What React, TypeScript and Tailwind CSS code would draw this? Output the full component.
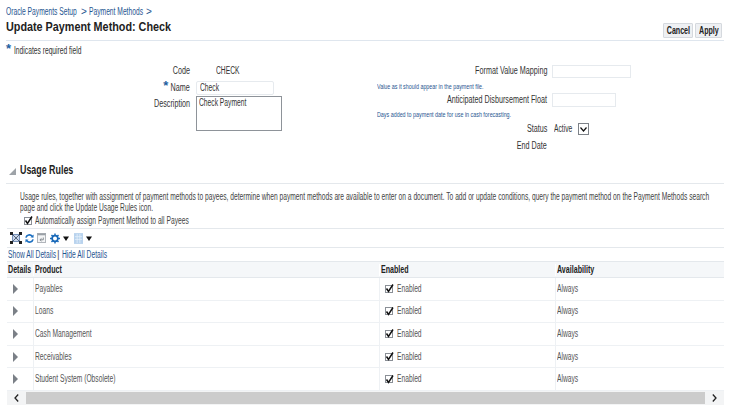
import type { ReactNode } from "react";

const ROWS = ["Payables", "Loans", "Cash Management", "Receivables", "Student System (Obsolete)"];

// The reference text is squeezed horizontally, and no installed family is that narrow
const SCALES = {
  body: "scale-x-[0.67]",
  para: "scale-x-[0.667]",
  label: "scale-x-[0.72]",
  head: "scale-x-[0.71]",
  title: "scale-x-[0.9]",
  section: "scale-x-[0.74]",
};

function T({
  children,
  s = "body",
  className = "origin-left",
}: {
  children: ReactNode;
  s?: keyof typeof SCALES;
  className?: string;
}) {
  return <span className={`inline-block whitespace-nowrap ${SCALES[s]} ${className}`}>{children}</span>;
}

// ── Small pieces ───────────────────────────────────────────────────────

function Check() {
  return (
    <span className="w-[8px] h-[8px] border border-[#8a8f96] bg-white flex items-center justify-center shrink-0">
      <svg width="9" height="9" viewBox="0 0 9 9" className="shrink-0">
        <path d="M1.5 4.5 L3.5 7.5 L8 0.5" fill="none" stroke="#111" strokeWidth="1.5" />
      </svg>
    </span>
  );
}

function Star({ className = "" }: { className?: string }) {
  return <span className={`text-[#1f5f9f] font-bold text-[13px] leading-[8px] h-[8px] ${className}`}>*</span>;
}

function Caret() {
  return (
    <svg width="6" height="5" viewBox="0 0 6 5">
      <path d="M0 0.5 H6 L3 5 Z" fill="#111" />
    </svg>
  );
}

function Toolbar() {
  return (
    <div className="h-[19px] flex items-center pl-[3px] border-b border-[#e4e8ec]">
      {/* detach */}
      <svg width="12" height="12" viewBox="0 0 12 12" className="mr-[3px]">
        <rect x="2.5" y="2.5" width="7" height="7" fill="#c9d6ea" stroke="#5b7aa8" strokeWidth="0.8" />
        <path d="M3 3 L9 9 M9 3 L3 9" stroke="#3a4a60" strokeWidth="0.8" />
        <rect x="0" y="0" width="3" height="3" fill="#222" />
        <rect x="9" y="0" width="3" height="3" fill="#222" />
        <rect x="0" y="9" width="3" height="3" fill="#222" />
        <rect x="9" y="9" width="3" height="3" fill="#222" />
      </svg>
      {/* refresh */}
      <svg width="9" height="9" viewBox="0 0 10 10" className="mr-[3px]">
        <path d="M1 4 A4 4 0 0 1 8 2.5" fill="none" stroke="#1c6fc0" strokeWidth="1.8" />
        <path d="M9.6 0.6 L9.4 4.2 L6 3.6 Z" fill="#1c6fc0" />
        <path d="M9 6 A4 4 0 0 1 2 7.5" fill="none" stroke="#1c6fc0" strokeWidth="1.8" />
        <path d="M0.4 9.4 L0.6 5.8 L4 6.4 Z" fill="#1c6fc0" />
      </svg>
      {/* wrap */}
      <svg width="9" height="10" viewBox="0 0 10 11" className="mr-[4px]">
        <rect x="0.5" y="0.5" width="9" height="10" fill="#f4f5f6" stroke="#a9aeb4" />
        <rect x="0.5" y="0.5" width="9" height="2" fill="#9aa0a6" />
        <path d="M7 5 V7.5 H3.5 M5 6 L3.2 7.5 L5 9" fill="none" stroke="#7d8389" />
      </svg>
      {/* settings */}
      <svg width="10" height="11" viewBox="0 0 12 12" className="mr-[3px]">
        <circle cx="6" cy="6" r="3.4" fill="none" stroke="#1768b8" strokeWidth="2" />
        <path d="M6 0 V2.5 M6 9.5 V12 M0 6 H2.5 M9.5 6 H12 M1.8 1.8 L3.5 3.5 M8.5 8.5 L10.2 10.2 M10.2 1.8 L8.5 3.5 M3.5 8.5 L1.8 10.2" stroke="#1768b8" strokeWidth="1.7" />
      </svg>
      <span className="mr-[5px] flex"><Caret /></span>
      {/* columns */}
      <svg width="9" height="11" viewBox="0 0 10 12" className="mr-[3px]">
        <rect x="0" y="0" width="10" height="12" fill="#b9d3ee" />
        <path d="M3.5 1 V11 M6.5 1 V11 M1 4 H9 M1 7 H9" stroke="#e9f2fb" strokeWidth="0.8" />
      </svg>
      <Caret />
    </div>
  );
}

function ProductRow({ name }: { name: string }) {
  return (
    <div className="h-[22.6px] grid grid-cols-[27px_346px_176px_1fr] items-center border-b border-[#eef1f4] text-[#555]">
      <div className="h-full flex items-center pl-[6px] border-r border-[#eef1f4]">
        <svg width="5" height="10" viewBox="0 0 5 10">
          <path d="M0 0 L5 5 L0 10 Z" fill="#7b8087" />
        </svg>
      </div>
      <div className="h-full flex items-center pl-[1px] border-r border-[#eef1f4]"><T>{name}</T></div>
      <div className="h-full flex items-center gap-[4px] pl-[5px] border-r border-[#eef1f4]">
        <Check />
        <T>Enabled</T>
      </div>
      <div className="pl-[1px]"><T>Always</T></div>
    </div>
  );
}

// ── Page ───────────────────────────────────────────────────────────────

export default function App() {
  return (
    <div className="w-[749px] h-[412px] overflow-hidden bg-white text-[#333] text-[10px] leading-[12px] font-['Liberation_Sans',Arial,sans-serif]">
      {/* Header */}
      <div className="ml-[6px] w-[718px] h-[41px] pt-[6px] border-b border-[#dfe6ee] flex justify-between">
        <div>
          <div className="flex text-[#1f5590]">
            <T className="origin-left w-[75px]">Oracle Payments Setup</T>
            <span className="w-[8px]">&gt;</span>
            <T className="origin-left w-[57px]">Payment Methods</T>
            <span>&gt;</span>
          </div>
          <h1 className="mt-[1px] text-[12px] leading-[16px] font-bold text-[#222]">
            <T s="title">Update Payment Method: Check</T>
          </h1>
        </div>
        <div className="flex gap-[2px] mt-[17px] h-[15px] mr-[2px]">
          <button className="w-[30px] flex items-center justify-center bg-[#eef0f3] border border-[#d5d9de] rounded-[1px] font-bold text-[#222]">
            <T s="head" className="origin-center">Cancel</T>
          </button>
          <button className="w-[27px] flex items-center justify-center bg-[#eef0f3] border border-[#d5d9de] rounded-[1px] font-bold text-[#222]">
            <T s="head" className="origin-center">Apply</T>
          </button>
        </div>
      </div>

      <div className="ml-[6px] mt-[3px] flex items-start gap-[3px]">
        <Star className="mt-[1px]" />
        <span className="mt-[1px]"><T>Indicates required field</T></span>
      </div>

      {/* Form */}
      <div className="mt-[6px] grid grid-cols-[375px_1fr]">
        <div className="grid grid-cols-[190px_1fr] gap-x-[6px] content-start">
          <div className="h-[17px] pb-[1px] flex items-center justify-end"><T s="label" className="origin-right">Code</T></div>
          <div className="h-[17px] pb-[1px] flex items-center pl-[20px]"><T>CHECK</T></div>
          <div className="h-[16px] flex items-center justify-end">
            <Star className="mb-[4px] -mr-[5px]" />
            <T s="label" className="origin-right">Name</T>
          </div>
          <div className="h-[16px] flex items-center">
            <div className="w-[78px] h-[14px] border border-[#e6eaee] rounded-[2px] flex items-center pl-[3px]"><T>Check</T></div>
          </div>
          <div className="h-[35px] pt-[2px] flex justify-end items-start"><T s="label" className="origin-right">Description</T></div>
          <div className="w-[86px] h-[35px] border border-[#8e9399] pl-[2px]"><T>Check Payment</T></div>
        </div>
        <div className="pl-[2px] grid grid-cols-[170px_1fr] gap-x-[5px] content-start">
          <div className="h-[16px] flex items-center justify-end"><T s="label" className="origin-right">Format Value Mapping</T></div>
          <div className="h-[16px] flex items-center">
            <div className="w-[79px] h-[13px] border border-[#e6eaee]" />
          </div>
          <div className="col-span-2 h-[13px] pt-[2px] flex items-center text-[8px] text-[#1f5590]"><T>Value as it should appear in the payment file.</T></div>
          <div className="h-[16px] flex items-center justify-end"><T s="label" className="origin-right">Anticipated Disbursement Float</T></div>
          <div className="h-[16px] flex items-center">
            <div className="w-[64px] h-[14px] border border-[#e6eaee]" />
          </div>
          <div className="col-span-2 h-[13px] pt-[1px] flex items-center text-[8px] text-[#1f5590]"><T>Days added to payment date for use in cash forecasting.</T></div>
          <div className="h-[17px] pb-[1px] flex items-center justify-end"><T s="label" className="origin-right">Status</T></div>
          <div className="h-[17px] pb-[1px] flex items-center pl-[2px]">
            <T className="origin-left w-[24px]">Active</T>
            <span className="w-[11px] h-[12px] border border-[#7d8288] flex items-center justify-center">
              <svg width="7" height="5" viewBox="0 0 7 5">
                <path d="M0.5 0.5 L3.5 4 L6.5 0.5" fill="none" stroke="#111" strokeWidth="1.2" />
              </svg>
            </span>
          </div>
          <div className="h-[16px] flex items-center justify-end"><T s="label" className="origin-right">End Date</T></div>
        </div>
      </div>

      {/* Usage Rules */}
      <div className="ml-[6px] w-[718px] mt-[6px] h-[24px] border-b border-[#e4e8ec] flex items-center gap-[4px] pb-[3px]">
        <svg width="7" height="7" viewBox="0 0 7 7" className="ml-[3px] mt-[2px]">
          <path d="M7 0 V7 H0 Z" fill="#9ea3a8" />
        </svg>
        <h2 className="text-[12px] font-bold text-[#222]"><T s="section">Usage Rules</T></h2>
      </div>

      <div className="ml-[20px] mt-[7px] leading-[11px] text-[#444]">
        <div><T s="para">Usage rules, together with assignment of payment methods to payees, determine when payment methods are available to enter on a document. To add or update conditions, query the payment method on the Payment Methods search</T></div>
        <div><T s="para">page and click the Update Usage Rules icon.</T></div>
      </div>
      <div className="ml-[24px] mt-[2px] h-[11px] flex items-center gap-[3px] text-[#444]">
        <Check />
        <T>Automatically assign Payment Method to all Payees</T>
      </div>

      {/* Table */}
      <div className="ml-[7px] w-[717px] mt-[2px] border-t border-[#e4e8ec]">
        <Toolbar />
        <div className="h-[13px] flex items-center pl-[1px] text-[#1f5590]">
          <T className="origin-left w-[49px]">Show All Details</T>
          <span className="text-[#555] w-[5px]">|</span>
          <T>Hide All Details</T>
        </div>
        <div className="h-[17px] grid grid-cols-[27px_346px_176px_1fr] items-center bg-[#f5f7f9] border-y border-[#e4e8ec] font-bold text-[#222]">
          <div className="pl-[1px] border-r border-white"><T s="head">Details</T></div>
          <div className="pl-[1px] border-r border-white"><T s="head">Product</T></div>
          <div className="pl-[1px] border-r border-white"><T s="head">Enabled</T></div>
          <div className="pl-[1px]"><T s="head">Availability</T></div>
        </div>
        {ROWS.map((r) => (
          <ProductRow key={r} name={r} />
        ))}
        <div className="h-[14px] flex items-center bg-[#f3f4f5] pt-[1px]">
          <div className="w-[19px] flex justify-center">
            <svg width="5" height="8" viewBox="0 0 5 8">
              <path d="M4.2 0.5 L1 4 L4.2 7.5" fill="none" stroke="#222" strokeWidth="1.3" />
            </svg>
          </div>
          <div className="flex-1 h-[12px] bg-[#cccccc]" />
          <div className="w-[19px] flex justify-center">
            <svg width="5" height="8" viewBox="0 0 5 8">
              <path d="M0.8 0.5 L4 4 L0.8 7.5" fill="none" stroke="#222" strokeWidth="1.3" />
            </svg>
          </div>
        </div>
      </div>
    </div>
  );
}
